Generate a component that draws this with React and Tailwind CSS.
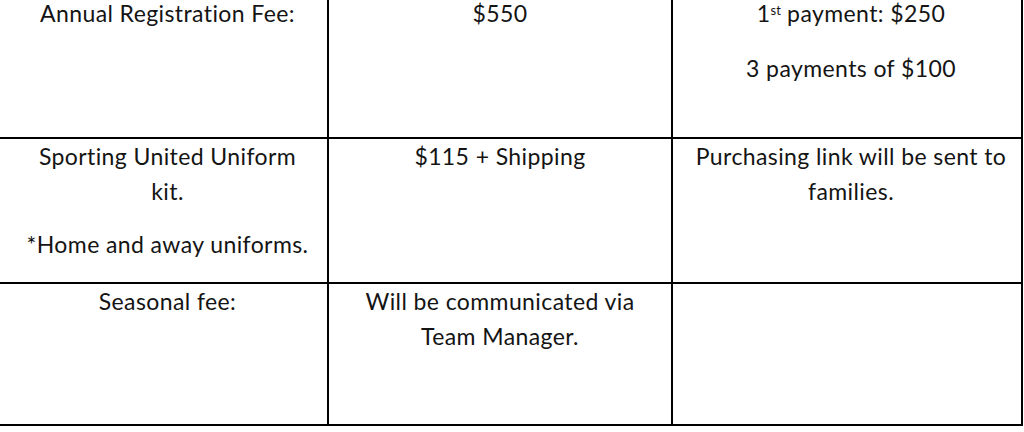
export default function App() {
  const cell = "border-r-2 border-b-2 border-black text-center";

  return (
    <div
      className="w-[1024px] h-[432px] bg-white overflow-hidden text-[#141414] text-[23px] leading-[35px] tracking-[0.4px]"
      style={{ fontFamily: "Lato, 'Open Sans', sans-serif" }}
    >
      <div className="mt-[-4px] w-[1023px] flex flex-col">
        <div className="flex h-[143px]">
          <div className={`${cell} w-[329px] pl-[8px]`}>
            <p>Annual Registration Fee:</p>
          </div>
          <div className={`${cell} w-[344px]`}>
            <p>$550</p>
          </div>
          <div className={`${cell} w-[350px] pl-[8px]`}>
            <p>
              1<span className="relative -top-[7px] text-[13px] tracking-normal">st</span> payment: $250
            </p>
            <p className="mt-[16px]">3 payments of $100</p>
          </div>
        </div>

        <div className="flex h-[145px]">
          <div className={`${cell} w-[329px] pl-[8px]`}>
            <p className="whitespace-nowrap">
              Sporting United Uniform
              <br />
              kit.
            </p>
            <p className="mt-[18px] whitespace-nowrap">*Home and away uniforms.</p>
          </div>
          <div className={`${cell} w-[344px]`}>
            <p>$115 + Shipping</p>
          </div>
          <div className={`${cell} w-[350px] pl-[8px]`}>
            <p className="whitespace-nowrap">
              Purchasing link will be sent to
              <br />
              families.
            </p>
          </div>
        </div>

        <div className="flex h-[142px]">
          <div className={`${cell} w-[329px] pl-[8px]`}>
            <p>Seasonal fee:</p>
          </div>
          <div className={`${cell} w-[344px]`}>
            <p className="whitespace-nowrap">
              Will be communicated via
              <br />
              Team Manager.
            </p>
          </div>
          <div className={`${cell} w-[350px]`}></div>
        </div>
      </div>
    </div>
  );
}
